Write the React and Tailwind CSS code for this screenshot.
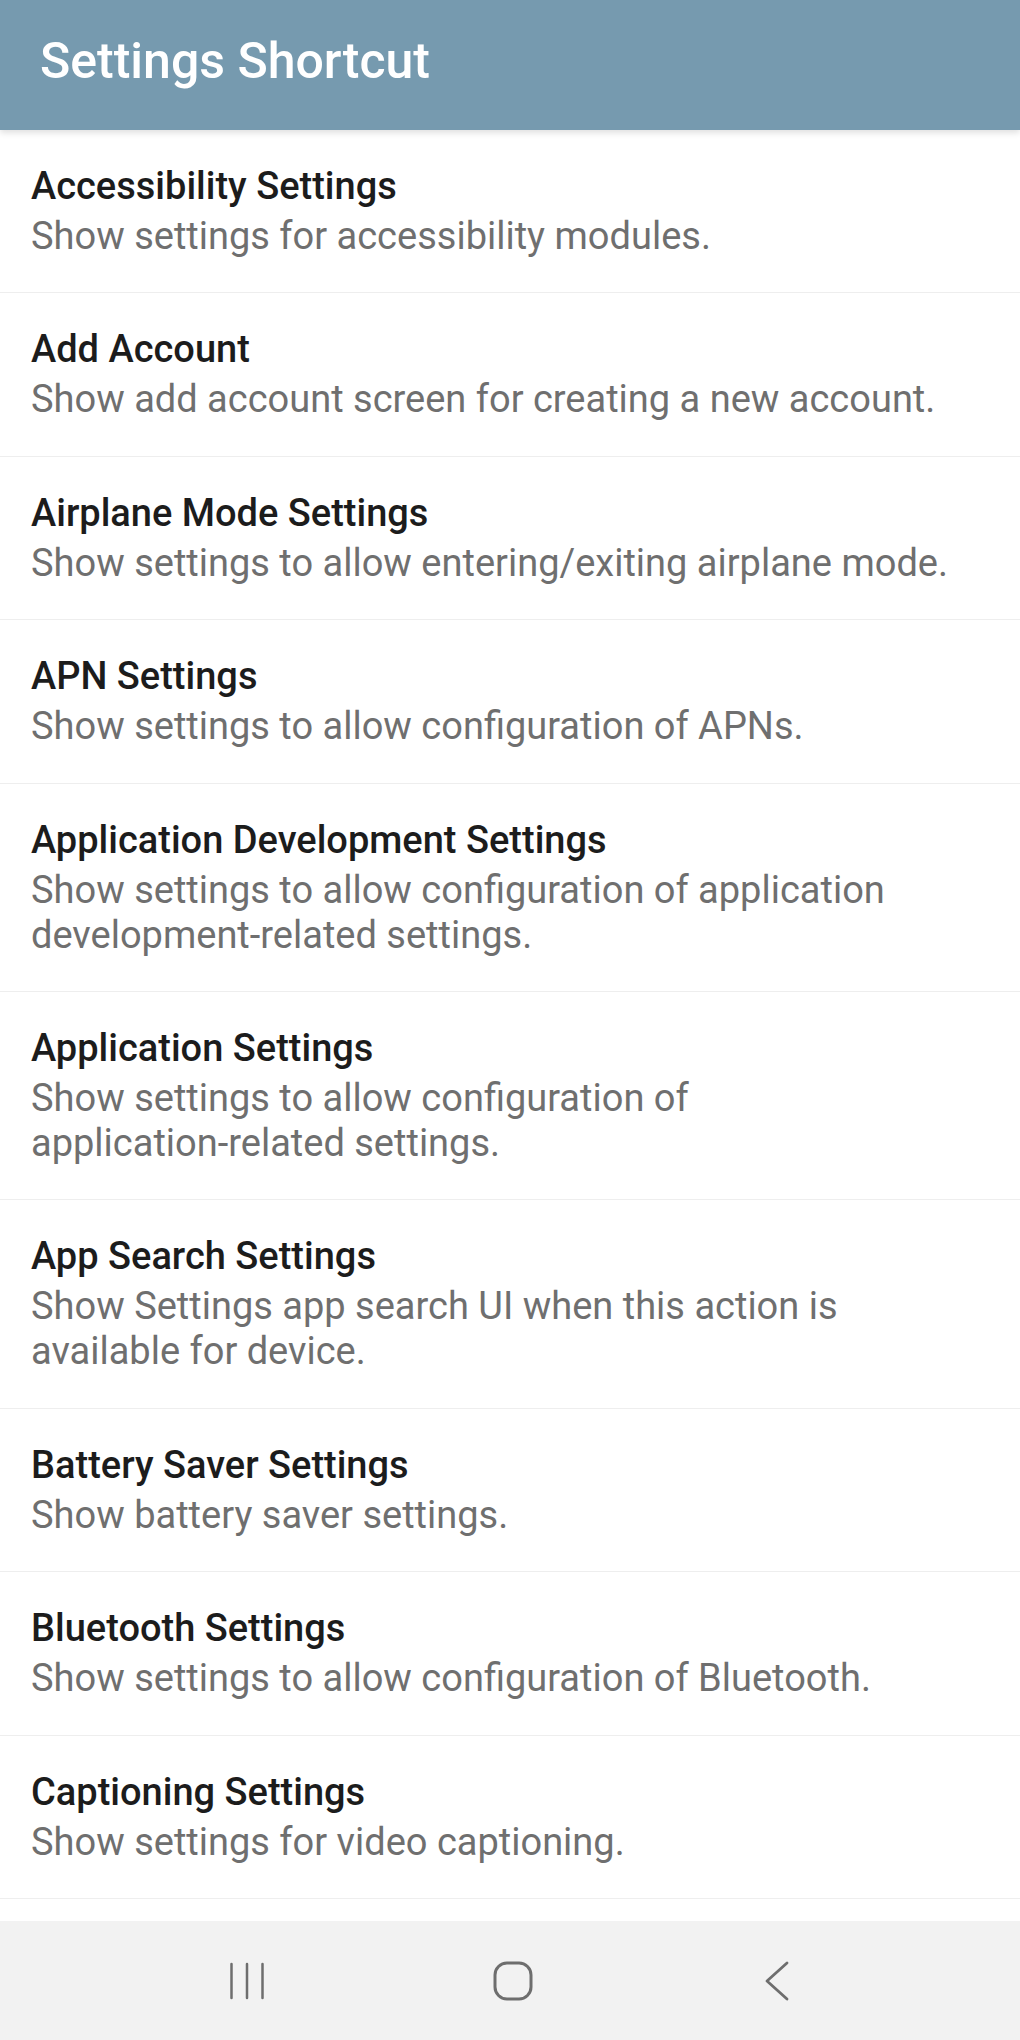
import React from "react";

const shortcuts = [
  {
    title: "Accessibility Settings",
    summary: "Show settings for accessibility modules.",
  },
  {
    title: "Add Account",
    summary: "Show add account screen for creating a new account.",
  },
  {
    title: "Airplane Mode Settings",
    summary: "Show settings to allow entering/exiting airplane mode.",
  },
  {
    title: "APN Settings",
    summary: "Show settings to allow configuration of APNs.",
  },
  {
    title: "Application Development Settings",
    summary: "Show settings to allow configuration of application",
    keep: "development-related",
    tail: " settings.",
  },
  {
    title: "Application Settings",
    summary: "Show settings to allow configuration of",
    keep: "application-related",
    tail: " settings.",
  },
  {
    title: "App Search Settings",
    summary:
      "Show Settings app search UI when this action is available for device.",
  },
  {
    title: "Battery Saver Settings",
    summary: "Show battery saver settings.",
  },
  {
    title: "Bluetooth Settings",
    summary: "Show settings to allow configuration of Bluetooth.",
  },
  {
    title: "Captioning Settings",
    summary: "Show settings for video captioning.",
  },
];

const ShortcutRow = ({ item }) => (
  <div className="border-b border-[#eeeeee] px-[31px] pt-[34px] pb-[33.4px]">
    <p className="text-[38px] leading-[44px] font-medium text-[#1c1c1c]">
      {item.title}
    </p>
    <p className="mt-[6px] text-[38px] leading-[45px] text-[#6f6f6f]">
      {item.summary}
      {item.keep && (
        <>
          {" "}
          <span className="whitespace-nowrap">{item.keep}</span>
          {item.tail}
        </>
      )}
    </p>
  </div>
);

export default function App() {
  return (
    <div
      className="w-[1020px] h-[2040px] bg-white flex flex-col overflow-hidden"
      style={{ fontFamily: "Roboto, 'Noto Sans', sans-serif" }}
    >
      <header className="h-[130px] shrink-0 bg-[#769aaf] pl-[40px] pt-[32px] shadow-[0_3px_6px_rgba(0,0,0,0.12)] relative z-10">
        <h1 className="text-[50px] leading-[58px] font-medium text-white">
          Settings Shortcut
        </h1>
      </header>
      <div className="flex-1 overflow-hidden">
        {shortcuts.map((item) => (
          <ShortcutRow key={item.title} item={item} />
        ))}
      </div>
      <div className="h-[119px] shrink-0 bg-[#f2f2f2] flex items-center pl-[227px]">
        {/* recents */}
        <svg width="40" height="40" viewBox="0 0 40 40">
          <g stroke="#6e6e6e" strokeWidth="2.5" strokeLinecap="round">
            <line x1="4.5" y1="3" x2="4.5" y2="37" />
            <line x1="20" y1="3" x2="20" y2="37" />
            <line x1="35.5" y1="3" x2="35.5" y2="37" />
          </g>
        </svg>
        {/* home */}
        <svg width="40" height="40" viewBox="0 0 40 40" className="ml-[226px]">
          <rect
            x="2"
            y="2"
            width="36"
            height="36"
            rx="12"
            fill="none"
            stroke="#6e6e6e"
            strokeWidth="3"
          />
        </svg>
        {/* back */}
        <svg width="24" height="40" viewBox="0 0 24 40" className="ml-[232px]">
          <polyline
            points="22,2 2,20 22,38"
            fill="none"
            stroke="#6e6e6e"
            strokeWidth="2.8"
            strokeLinecap="round"
            strokeLinejoin="round"
          />
        </svg>
      </div>
    </div>
  );
}
